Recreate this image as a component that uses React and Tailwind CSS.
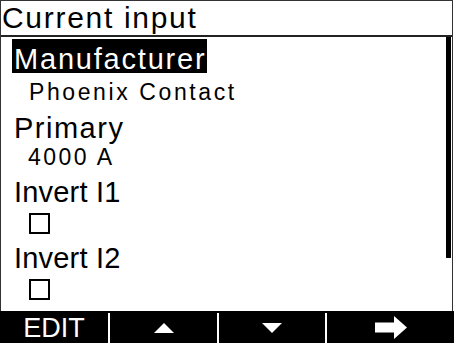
export default function App() {
  const font = "font-['Liberation_Sans',Arial,sans-serif]";
  return (
    <div className={`w-[454px] h-[343px] bg-white overflow-hidden text-black ${font}`}>
      <div className="w-[453px] h-[311px] border-l border-r border-t border-[#333] flex flex-col">
        <div className="h-[36px] border-b-2 border-[#222] pl-[1px] text-[30px] leading-[34px] tracking-[1.7px] whitespace-nowrap">
          Current input
        </div>
        <div className="flex flex-1 min-h-0">
          <div className="flex-1 flex flex-col">
            <div className="flex pl-[11px] h-[34px] mt-[2px]">
              <span className="pl-[2px] pr-[1px] pt-[6px] leading-[28px] text-[29px] tracking-[1.8px] bg-black text-white whitespace-nowrap">
                Manufacturer
              </span>
            </div>
            <div className="flex pl-[28px] h-[35px]">
              <span className="pt-[3px] leading-[32px] text-[23px] tracking-[2.6px] whitespace-nowrap">
                Phoenix Contact
              </span>
            </div>
            <div className="flex pl-[11px] h-[34px]">
              <span className="px-[2px] pt-[6px] leading-[28px] text-[29px] tracking-[1.5px] whitespace-nowrap">
                Primary
              </span>
            </div>
            <div className="flex pl-[27px] h-[30px]">
              <span className="leading-[30px] text-[23px] tracking-[2.5px] whitespace-nowrap">
                4000 A
              </span>
            </div>
            <div className="flex pl-[11px] h-[34px]">
              <span className="px-[2px] pt-[6px] leading-[28px] text-[29px] tracking-[0.2px] whitespace-nowrap">
                Invert I1
              </span>
            </div>
            <div className="h-[32px] pl-[28px] pt-[7px]">
              <div className="w-[21px] h-[21px] border-2 border-black"></div>
            </div>
            <div className="flex pl-[11px] h-[34px]">
              <span className="px-[2px] pt-[6px] leading-[28px] text-[29px] tracking-[0.2px] whitespace-nowrap">
                Invert I2
              </span>
            </div>
            <div className="pl-[28px] pt-[7px]">
              <div className="w-[21px] h-[21px] border-2 border-black"></div>
            </div>
          </div>
          <div className="w-[6px]">
            <div className="w-[5px] h-[221px] bg-black"></div>
          </div>
        </div>
      </div>
      <div className="flex h-[32px] w-[454px] bg-black">
        <div className="w-[108px] flex justify-center text-white text-[27px] pt-[3px] leading-[29px]">
          EDIT
        </div>
        <div className="w-[2px] bg-white mt-[2px]"></div>
        <div className="w-[107px] flex items-center justify-center pt-[2px]">
          <svg width="20" height="10" viewBox="0 0 20 10">
            <polygon points="10,0 20,10 0,10" fill="white" />
          </svg>
        </div>
        <div className="w-[2px] bg-white mt-[2px]"></div>
        <div className="w-[106px] flex items-center justify-center pt-[2px]">
          <svg width="20" height="10" viewBox="0 0 20 10">
            <polygon points="0,0 20,0 10,10" fill="white" />
          </svg>
        </div>
        <div className="w-[2px] bg-white mt-[2px]"></div>
        <div className="flex-1 flex items-center justify-center">
          <svg width="32" height="23" viewBox="0 0 32 23">
            <polygon points="0,6.5 19,6.5 19,0 32,11.5 19,23 19,16.5 0,16.5" fill="white" />
          </svg>
        </div>
      </div>
    </div>
  );
}
